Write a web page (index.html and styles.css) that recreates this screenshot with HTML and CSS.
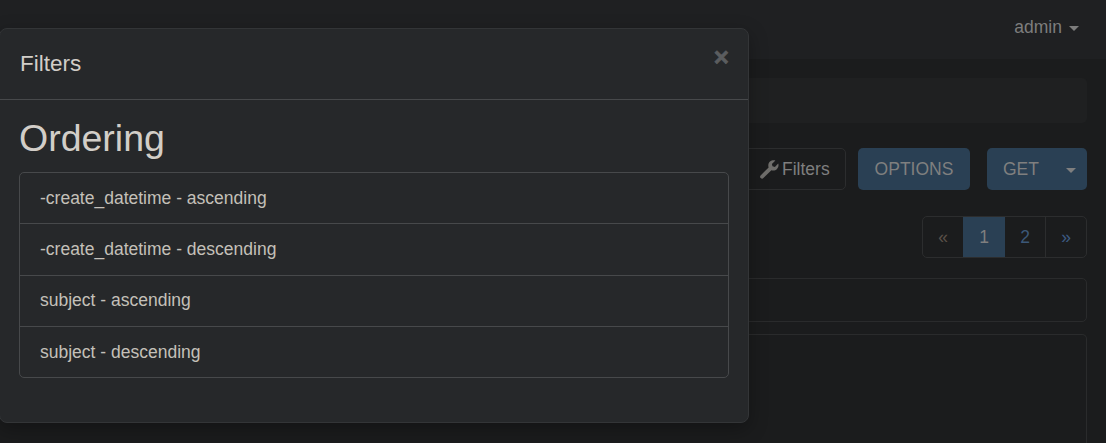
FILE: index.html
```html
<!DOCTYPE html>
<html lang="en">
<head>
<meta charset="utf-8">
<title>Filters</title>
<link rel="stylesheet" href="styles.css">
</head>
<body>
<div class="page">
  <header class="navbar"><span class="user">admin<i class="caret"></i></span></header>
  <main class="content">
    <div class="breadcrumb"></div>
    <div class="toolbar">
      <button class="btn btn-outline"><svg class="wrench" viewBox="0 0 20 20" aria-hidden="true"><path d="M1.6 16.4 9.6 8.4C8.9 6.3 9.4 4 11 2.6 12.5 1.2 14.6.8 16.4 1.5L12.9 4.9 13.5 7.3 15.9 7.9 19.2 4.5C19.9 6.3 19.4 8.4 18 9.9 16.6 11.4 14.4 11.9 12.4 11.2L4.4 19.1C3.7 19.8 2.5 19.8 1.8 19.1L1.6 18.9C.9 18.2.9 17.1 1.6 16.4Z"/></svg>Filters</button>
      <button class="btn btn-primary btn-options">OPTIONS</button>
      <button class="btn btn-primary btn-get"><span>GET</span><i class="caret"></i></button>
    </div>
    <nav class="pagination">
      <a class="page-item prev">«</a>
      <a class="page-item active">1</a>
      <a class="page-item">2</a>
      <a class="page-item next">»</a>
    </nav>
    <div class="panel panel-request"></div>
    <div class="panel panel-response"></div>
  </main>
</div>
<section class="modal">
  <div class="modal-header">
    <h4>Filters</h4>
    <span class="close">×</span>
  </div>
  <div class="modal-body">
    <h2>Ordering</h2>
    <ul class="list">
      <li>-create_datetime - ascending</li>
      <li>-create_datetime - descending</li>
      <li>subject - ascending</li>
      <li>subject - descending</li>
    </ul>
  </div>
</section>
</body>
</html>
```
FILE: styles.css
```css
* { box-sizing: border-box; }
html, body { margin: 0; height: 100%; }
body {
  position: relative;
  overflow: hidden;
  background: #1b1c1d;
  color: #7f7f7f;
  font: 17.5px/25px "Liberation Sans", Arial, sans-serif;
}
.navbar {
  height: 59px;
  background: #1f2022;
  display: flex;
  justify-content: flex-end;
  align-items: center;
  padding: 0 27px 4px 0;
}
.user { display: flex; align-items: center; color: #7d7d7d; }
.caret {
  display: inline-block;
  width: 0; height: 0;
  border-top: 5px solid currentColor;
  border-left: 5px solid transparent;
  border-right: 5px solid transparent;
}
.user .caret { margin-left: 7px; margin-top: 2px; }
.content { padding: 19px 19px 0; display: flex; flex-direction: column; }
.breadcrumb { height: 45px; background: #1f2021; border-radius: 5px; }
.toolbar { margin-top: 25px; display: flex; justify-content: flex-end; }
.btn {
  height: 42px;
  border-radius: 5px;
  font: inherit;
  color: #7f7f7f;
  border: 1px solid transparent;
  padding: 0;
  display: flex;
  align-items: center;
}
.btn-outline {
  width: 102px;
  padding-left: 14px;
  margin-right: 12px;
  background: transparent;
  border-color: #2c2d2e;
}
.wrench { width: 20px; height: 20px; fill: #6f6e6b; margin-right: 3px; }
.btn-primary { background: #2a4054; justify-content: center; }
.btn-options { width: 112px; margin-right: 17px; }
.btn-get { width: 100px; justify-content: flex-start; padding-left: 15px; }
.btn-get .caret { margin-left: 27px; margin-top: 2px; }
.pagination {
  margin-top: 26px;
  align-self: flex-end;
  display: flex;
  width: 165px;
  height: 42px;
  border: 1px solid #2c2d2e;
  border-radius: 5px;
  overflow: hidden;
}
.page-item {
  width: 40px;
  display: flex;
  align-items: center;
  justify-content: center;
  color: #3c5878;
}
.page-item.prev { color: #5a5048; }
.page-item.active { width: 42px; background: #2a4054; color: #7f7f7f; }
.page-item.next { width: 41px; border-left: 1px solid #2c2d2e; color: #3c5a82; }
.panel { border: 1px solid #2a2b2c; border-radius: 5px; }
.panel-request { margin-top: 20px; height: 44px; }
.panel-response { margin-top: 12px; height: 200px; border-left: 0; }
.modal {
  position: absolute;
  left: -1px;
  top: 28px;
  width: 750px;
  height: 395px;
  background: #26282a;
  border: 1px solid #333537;
  border-radius: 8px;
  box-shadow: 0 6px 19px rgba(0, 0, 0, .3);
  color: #c4c0b9;
}
.modal-header {
  position: relative;
  height: 71px;
  border-bottom: 1px solid #47494b;
  padding: 21px 19px 0 20px;
}
.modal-header h4 { margin: 0; font-size: 22.5px; line-height: 28px; font-weight: 400; color: #d2cec8; }
.close {
  position: absolute;
  right: 19px;
  top: 15px;
  font-size: 26px;
  line-height: 26px;
  font-weight: 700;
  color: #5b5d5f;
  -webkit-text-stroke: .7px #5b5d5f;
}
.modal-body { padding: 18px 19px 0; }
.modal-body h2 { margin: 0 0 13px; font-size: 37.5px; line-height: 41px; font-weight: 400; color: #d2cec8; }
.list {
  list-style: none;
  margin: 0;
  padding: 0;
  border: 1px solid #47494b;
  border-radius: 5px;
}
.list li { height: 51.25px; padding: 0 20px; display: flex; align-items: center; }
.list li:first-child { height: 50.4px; }
.list li + li { border-top: 1px solid #47494b; }
```
